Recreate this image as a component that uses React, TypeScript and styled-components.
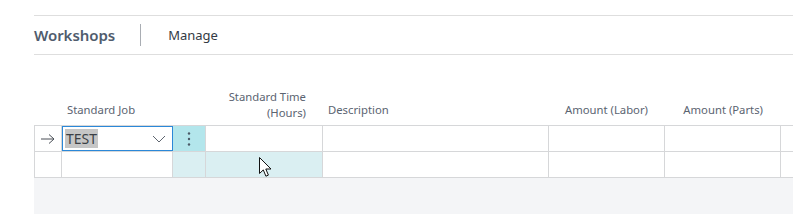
import React from "react";
import styled, { createGlobalStyle } from "styled-components";

const Global = createGlobalStyle`
  html, body { margin: 0; padding: 0; background: #ffffff; overflow: hidden; }
  body { font-family: "Noto Sans", "Open Sans", sans-serif; }
  * { box-sizing: border-box; }
`;

const Page = styled.div`
  position: relative;
  width: 793px;
  height: 223px;
  padding: 15px 0 0 34px;
  overflow: hidden;
`;

const ActionBar = styled.div`
  display: flex;
  align-items: center;
  height: 40px;
  border-top: 1px solid #dedede;
  border-bottom: 1px solid #dedede;
  margin-right: -40px;
`;

const Title = styled.div`
  font-size: 15px;
  font-weight: 600;
  color: #505c6d;
  letter-spacing: -0.05px;
`;

const Divider = styled.div`
  width: 1px;
  height: 22px;
  background: #a9adb3;
  margin: 0 27px 0 25px;
`;

const Action = styled.div`
  font-size: 13px;
  color: #333a44;
`;

const COLS = "27px 111px 33px 117px 226px 116px 116px 116px";

const Grid = styled.div`
  display: grid;
  grid-template-columns: ${COLS};
  margin-top: 30px;
`;

const HeadCell = styled.div<{ $align?: "left" | "right"; $pb?: number }>`
  display: flex;
  flex-direction: column;
  justify-content: flex-end;
  align-items: ${(p) => (p.$align === "right" ? "flex-end" : "flex-start")};
  text-align: ${(p) => p.$align ?? "left"};
  height: 40px;
  padding: 0 ${(p) => (p.$align === "right" ? "16px" : "0")} ${(p) => p.$pb ?? 7}px
    ${(p) => (p.$align === "right" ? "0" : "6px")};
  font-size: 11.3px;
  line-height: 16px;
  color: #5b6471;
  white-space: nowrap;
`;

const Body = styled.div`
  display: grid;
  grid-template-columns: ${COLS};
  border-top: 1px solid #d6d7d9;
`;

const Cell = styled.div<{ $bg?: string }>`
  position: relative;
  height: 26px;
  border-left: 1px solid #d6d7d9;
  border-bottom: 1px solid #d6d7d9;
  background: ${(p) => p.$bg ?? "#ffffff"};
  display: flex;
  align-items: center;
  justify-content: center;
`;

const InputBox = styled.div`
  position: relative;
  z-index: 1;
  align-self: stretch;
  width: calc(100% + 1px);
  margin-right: -1px;
  border: 1px solid #2b88d8;
  background: #ffffff;
  display: flex;
  align-items: center;
  padding: 0 6px 0 2px;
`;

const Selected = styled.span`
  background: #c6c6c6;
  color: #3b3f45;
  font-size: 14px;
  line-height: 19px;
  padding: 0 1px;
`;

const Spacer = styled.div`
  flex: 1;
`;

const Footer = styled.div`
  height: 36px;
  background: #f4f5f7;
  margin-right: -40px;
`;

const Cursor = styled.svg`
  position: absolute;
  left: 259px;
  top: 157px;
`;

const CYAN = "#b3e6ec";
const LIGHT = "#daeff2";

export default function App() {
  return (
    <>
      <Global />
      <Page>
        <ActionBar>
          <Title>Workshops</Title>
          <Divider />
          <Action>Manage</Action>
        </ActionBar>
        <Grid>
          <HeadCell />
          <HeadCell>Standard Job</HeadCell>
          <HeadCell />
          <HeadCell $align="right" $pb={4}>
            <span>Standard Time</span>
            <span>(Hours)</span>
          </HeadCell>
          <HeadCell>Description</HeadCell>
          <HeadCell $align="right">Amount (Labor)</HeadCell>
          <HeadCell $align="right">
            <span style={{ marginRight: 1 }}>Amount (Parts)</span>
          </HeadCell>
          <HeadCell />
        </Grid>
        <Body>
          <Cell>
            <svg width="16" height="12" viewBox="0 0 16 12">
              <path d="M1 6 H14 M9 1.5 L14 6 L9 10.5" fill="none" stroke="#4a4f57" strokeWidth="1" />
            </svg>
          </Cell>
          <Cell>
            <InputBox>
              <Selected>TEST</Selected>
              <Spacer />
              <svg width="14" height="8" viewBox="0 0 14 8">
                <path d="M1 1 L7 7 L13 1" fill="none" stroke="#5f6670" strokeWidth="1" />
              </svg>
            </InputBox>
          </Cell>
          <Cell $bg={CYAN}>
            <svg width="4" height="16" viewBox="0 0 4 16">
              <circle cx="2" cy="2.5" r="1.2" fill="#4b5a68" />
              <circle cx="2" cy="8" r="1.2" fill="#4b5a68" />
              <circle cx="2" cy="13.5" r="1.2" fill="#4b5a68" />
            </svg>
          </Cell>
          <Cell />
          <Cell />
          <Cell />
          <Cell />
          <Cell />

          <Cell />
          <Cell />
          <Cell $bg={LIGHT} />
          <Cell $bg={LIGHT} />
          <Cell />
          <Cell />
          <Cell />
          <Cell />
        </Body>
        <Footer />
        <Cursor width="14" height="21" viewBox="0 0 14 21">
          <path
            d="M0.5 0.5 L0.5 16.5 L4.3 12.9 L6.9 19.2 L9.4 18.1 L6.8 12 L12 12 Z"
            fill="#ffffff"
            stroke="#111111"
            strokeWidth="1"
            strokeLinejoin="miter"
          />
        </Cursor>
      </Page>
    </>
  );
}
